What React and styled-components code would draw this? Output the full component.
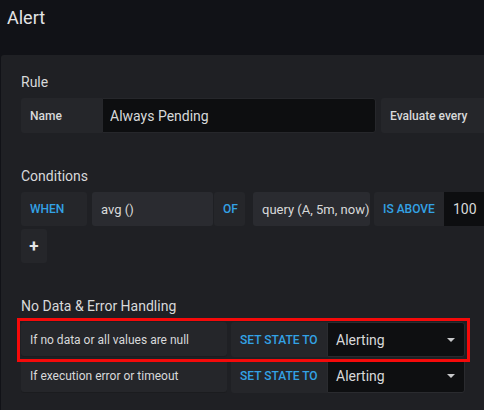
import React from "react";
import styled, { createGlobalStyle } from "styled-components";

const GlobalStyle = createGlobalStyle`
  html, body {
    margin: 0;
    background: #111217;
    overflow: hidden;
  }
  body {
    font-family: Roboto, "Liberation Sans", sans-serif;
    color: #d8d9da;
  }
`;

const App = () => {
  return (
    <>
      <GlobalStyle />
      <Page>
        <Title>Alert</Title>
        <Panel>
          <Section>
            <SectionTitle>Rule</SectionTitle>
            <Row $h={35}>
              <Label $width={81} $flat="right">Name</Label>
              <TextInput $width={274} defaultValue="Always Pending" />
              <Label $width={120} $ml={5}>Evaluate every</Label>
            </Row>
          </Section>

          <Section>
            <SectionTitle>Conditions</SectionTitle>
            <Row>
              <Label $width={66} $blue>WHEN</Label>
              <Label $width={121} $ml={5} $light>avg ()</Label>
              <Label $width={31} $ml={1} $blue>OF</Label>
              <Label $width={117} $ml={8} $light>query (A, 5m, now)</Label>
              <Label $width={70} $ml={4} $blue $flat="right">IS ABOVE</Label>
              <NumInput defaultValue="100" />
            </Row>
            <Row $mt={3}>
              <PlusButton>+</PlusButton>
            </Row>
          </Section>

          <Section>
            <SectionTitle>No Data &amp; Error Handling</SectionTitle>
            <Highlight>
              <Row $h={35}>
                <Label $width={206} $plain>If no data or all values are null</Label>
                <Label $width={96} $ml={4} $blue $flat="right">SET STATE TO</Label>
                <Select>
                  Alerting
                  <Caret />
                </Select>
              </Row>
            </Highlight>
            <Row $mt={2}>
              <Label $width={206} $plain>If execution error or timeout</Label>
              <Label $width={96} $ml={4} $blue $flat="right">SET STATE TO</Label>
              <Select>
                Alerting
                <Caret />
              </Select>
            </Row>
          </Section>
        </Panel>
      </Page>
    </>
  );
};

export default App;

const Page = styled.div`
  height: 410px;
  display: flex;
  flex-direction: column;
`;

const Title = styled.h2`
  flex: none;
  margin: 0;
  padding: 7px 0 0 7px;
  height: 48px;
  box-sizing: border-box;
  font-size: 18px;
  line-height: 22px;
  font-weight: 400;
  color: #e3e4e6;
`;

const Panel = styled.div`
  flex: 1;
  min-height: 0;
  margin-left: 1px;
  margin-top: 7px;
  padding: 17px 0 0 20px;
  background: #1f2024;
  border-radius: 3px 0 0 0;
  box-sizing: border-box;
`;

const Section = styled.div`
  margin-bottom: 33px;
`;

const SectionTitle = styled.div`
  font-size: 14px;
  line-height: 20px;
  margin-bottom: 6px;
  color: #d8d9da;
`;

const Row = styled.div`
  display: flex;
  align-items: stretch;
  white-space: nowrap;
  height: ${(p) => p.$h || 34}px;
  margin-top: ${(p) => p.$mt || 0}px;
`;

const Label = styled.div`
  flex: 0 0 auto;
  width: ${(p) => p.$width}px;
  margin-left: ${(p) => p.$ml || 0}px;
  box-sizing: border-box;
  display: flex;
  align-items: center;
  padding: 0 9px;
  background: ${(p) => (p.$light ? "#2a2b30" : "#25262a")};
  border-radius: ${(p) => (p.$flat === "right" ? "3px 0 0 3px" : "3px")};
  font-size: ${(p) => (p.$light ? "13px" : "12px")};
  font-weight: ${(p) => (p.$light || p.$plain ? 400 : 500)};
  color: ${(p) => (p.$blue ? "#33a2e5" : "#d8d9da")};
  box-shadow: ${(p) => (p.$plain ? "inset 0 -1px 0 #1b1c1f" : "none")};
  overflow: hidden;
`;

const TextInput = styled.input`
  flex: 0 0 auto;
  width: ${(p) => p.$width}px;
  box-sizing: border-box;
  background: #0d0e10;
  border: 1px solid #26272b;
  border-radius: 0 3px 3px 0;
  padding: 0 7px;
  font-family: inherit;
  font-size: 14px;
  color: #d8d9da;
  outline: none;
`;

const NumInput = styled(TextInput)`
  width: 60px;
  padding-left: 8px;
  border-radius: 0;
  border-color: #0d0e10;
`;

const PlusButton = styled.button`
  width: 26px;
  padding: 0;
  border: none;
  border-radius: 3px;
  background: #25262a;
  color: #e3e4e6;
  font-family: inherit;
  font-size: 17px;
  font-weight: 700;
  line-height: 1;
`;

/* red annotation frame drawn over the first row */
const Highlight = styled.div`
  position: relative;
  z-index: 1;
  width: fit-content;
  margin: -4px 0 -5px -4px;
  padding: 1px 2px 2px 1px;
  border: 3px solid #f50a0a;
`;

const Select = styled.div`
  flex: 0 0 auto;
  width: 138px;
  box-sizing: border-box;
  display: flex;
  align-items: center;
  justify-content: space-between;
  padding: 0 9px 0 8px;
  background: #0e0f11;
  border: 1px solid #2a2b2f;
  border-radius: 0 3px 3px 0;
  font-size: 14px;
  color: #d8d9da;
`;

const Caret = styled.span`
  width: 0;
  height: 0;
  border-left: 4px solid transparent;
  border-right: 4px solid transparent;
  border-top: 4px solid #c7c8ca;
`;
